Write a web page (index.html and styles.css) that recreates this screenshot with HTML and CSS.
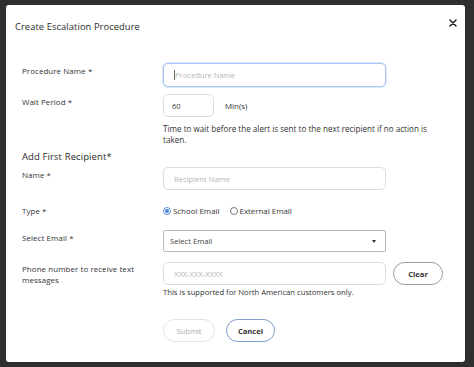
FILE: index.html
```html
<!DOCTYPE html>
<html>
<head>
<meta charset="utf-8">
<link rel="stylesheet" href="styles.css">
</head>
<body>
<div class="modal">
  <div class="header">
    <h1 class="title">Create Escalation Procedure</h1>
    <button class="close" aria-label="Close">
      <svg width="8" height="8" viewBox="0 0 8 8"><path d="M1 1L7 7M7 1L1 7" stroke="#222" stroke-width="1.5" stroke-linecap="round"/></svg>
    </button>
  </div>

  <div class="row r1">
    <label class="label">Procedure Name *</label>
    <div class="control focus-wrap">
      <input class="input wide focused" placeholder="Procedure Name">
      <span class="caret"></span>
    </div>
  </div>

  <div class="row r2">
    <label class="label">Wait Period *</label>
    <div class="control inline">
      <input class="input short" value="60">
      <span class="unit">Min(s)</span>
    </div>
  </div>

  <p class="help">Time to wait before the alert is sent to the next recipient if no action is taken.</p>

  <h2 class="section">Add First Recipient*</h2>

  <div class="row r3">
    <label class="label">Name *</label>
    <div class="control"><input class="input wide" placeholder="Recipient Name"></div>
  </div>

  <div class="row r4">
    <label class="label lt">Type *</label>
    <div class="control radios">
      <span class="radio on"></span><span class="rlabel">School Email</span>
      <span class="radio"></span><span class="rlabel">External Email</span>
    </div>
  </div>

  <div class="row r5">
    <label class="label">Select Email *</label>
    <div class="control">
      <div class="select"><span>Select Email</span><span class="arrow"></span></div>
    </div>
  </div>

  <div class="row r6">
    <label class="label two">Phone number to receive text messages</label>
    <div class="control inline">
      <input class="input wide" placeholder="XXX-XXX-XXXX">
      <button class="btn clear">Clear</button>
    </div>
  </div>

  <p class="note">This is supported for North American customers only.</p>

  <div class="actions">
    <button class="btn submit">Submit</button>
    <button class="btn cancel">Cancel</button>
  </div>
</div>
</body>
</html>
```

FILE: styles.css
```css
* { box-sizing: border-box; }
html, body { margin: 0; padding: 0; }
body {
  width: 474px;
  height: 367px;
  background: #2f2f2f;
  padding: 5px 9px 5px 6px;
  font-family: "Open Sans", "DejaVu Sans", sans-serif;
  color: #333;
  overflow: hidden;
}
.modal {
  width: 459px;
  height: 357px;
  background: #fff;
  border-radius: 3px;
  padding: 15px 0 0 16px;
  display: flex;
  flex-direction: column;
}
.header {
  display: flex;
  justify-content: space-between;
  align-items: flex-start;
  margin-left: -7px;
}
.title {
  margin: 0;
  font-size: 9.3px;
  font-weight: 400;
  line-height: 14px;
  letter-spacing: 0.1px;
  color: #2a2a2a;
}
.close {
  border: 0;
  background: none;
  padding: 0;
  margin: -1px 8px 0 0;
  width: 8px;
  height: 8px;
  display: flex;
}
.row {
  display: grid;
  grid-template-columns: 141px 1fr;
}
.label {
  font-size: 7.9px;
  line-height: 10px;
  padding-top: 3px;
  letter-spacing: 0.1px;
  color: #333;
}
.label.lt { padding-top: 1px; }
.label.two { padding-top: 3px; line-height: 11px; width: 125px; }
.control { display: flex; position: relative; }
.inline { align-items: center; }
.input {
  font-family: inherit;
  font-size: 7.6px;
  color: #444;
  border: 1px solid #dcdcdc;
  border-radius: 5px;
  padding: 0 0 0 10px;
  height: 23px;
  outline: none;
  background: #fff;
}
.input::placeholder { color: #b5b5b5; }
.wide { width: 223px; }
.short { width: 51px; padding-left: 8px; }
.focused {
  height: 24px;
  border-color: #a9c6f3;
  box-shadow: 0 0 0 1px #dbe8fb;
  padding-left: 11px;
}
.caret {
  position: absolute;
  left: 11px;
  top: 7px;
  width: 1px;
  height: 10px;
  background: #666;
}
.unit { font-size: 7.9px; margin-left: 11px; color: #333; }
.r1 { margin-top: 29px; }
.r2 { margin-top: 7px; }
.help {
  margin: 7px 0 0 141px;
  font-size: 8.1px;
  line-height: 10.5px;
  width: 282px;
  color: #333;
}
.section {
  margin: 5px 0 0;
  font-size: 9.5px;
  font-weight: 400;
  line-height: 13px;
  letter-spacing: 0.1px;
  color: #2a2a2a;
}
.r3 { margin-top: 4px; }
.r4 { margin-top: 15px; height: 12px; }
.radios { align-items: center; font-size: 7.9px; }
.radio {
  width: 8px;
  height: 8px;
  border: 1px solid #777;
  border-radius: 50%;
  position: relative;
}
.radio.on { border-color: #5b8fd6; }
.radio.on::after {
  content: "";
  position: absolute;
  left: 1px; top: 1px;
  width: 4px; height: 4px;
  border-radius: 50%;
  background: #4f86d4;
}
.rlabel { margin-left: 2px; margin-right: 10px; color: #333; }
.r5 { margin-top: 13px; }
.select {
  width: 223px;
  height: 22px;
  border: 1px solid #b9b9b9;
  border-radius: 2px;
  font-size: 7.6px;
  display: flex;
  align-items: center;
  justify-content: space-between;
  padding: 0 9px 0 6px;
  color: #444;
}
.arrow {
  width: 0; height: 0;
  border-left: 2.5px solid transparent;
  border-right: 2.5px solid transparent;
  border-top: 3px solid #333;
}
.r6 { margin-top: 9px; }
.btn {
  font-family: inherit;
  background: #fff;
  border-radius: 12px;
  height: 23px;
  font-size: 7.6px;
  padding: 0;
  cursor: pointer;
}
.clear {
  width: 50px;
  margin-left: 7px;
  border: 1px solid #9a9a9a;
  font-weight: 700;
  color: #333;
}
.note {
  margin: 1px 0 0 141px;
  font-size: 7.65px;
  line-height: 10px;
  color: #333;
}
.actions {
  margin: 22px 0 0 141px;
  display: flex;
  gap: 11px;
}
.submit {
  width: 52px;
  border: 1px solid #e3e3e3;
  color: #aaa;
}
.cancel {
  width: 49px;
  border: 1px solid #7c9ccb;
  color: #333;
  font-weight: 700;
}
```
